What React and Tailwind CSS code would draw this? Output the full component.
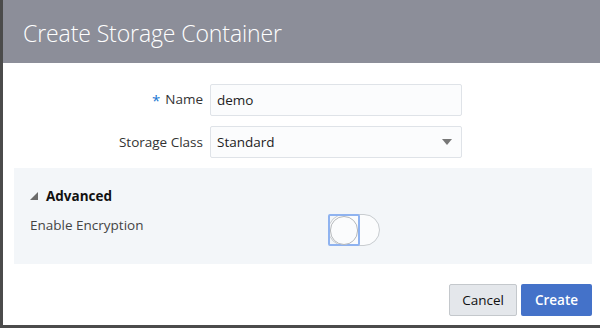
import React from "react";

const App = () => (
  <div
    className="w-[600px] h-[328px] bg-[#4b4b4b] pl-[3px] pb-[3px] overflow-hidden"
    style={{ fontFamily: '"Open Sans", "Noto Sans", sans-serif' }}
  >
    <div className="h-full bg-white flex flex-col">
      {/* Header */}
      <div className="h-[63px] bg-[#8c8e99] flex items-center pl-[20px] pt-[4px] shrink-0">
        <h1 className="text-[23px] text-white font-light tracking-[-0.1px]">Create Storage Container</h1>
      </div>

      {/* Fields */}
      <div className="pt-[21px] flex flex-col gap-[10px]">
        <div className="flex items-center">
          <label className="w-[207px] text-right text-[13.5px] text-[#333] pr-[7px]">
            <span className="text-[#1a77d2] mr-[5px] text-[15px] align-[-2px]">*</span>Name
          </label>
          <div className="w-[252px] h-[32px] border border-[#dfe3e8] rounded-[2px] bg-[#fbfcfd] flex items-center px-[6px] text-[13.5px] text-[#222]">
            demo
          </div>
        </div>
        <div className="flex items-center">
          <label className="w-[207px] text-right text-[13.5px] text-[#333] pr-[7px]">Storage Class</label>
          <div className="w-[252px] h-[32px] border border-[#dfe3e8] rounded-[2px] bg-[#fbfcfd] flex items-center justify-between pl-[6px] pr-[9px] text-[13.5px] text-[#222]">
            <span>Standard</span>
            <svg width="10" height="6" viewBox="0 0 10 6">
              <path d="M0 0 L10 0 L5 6 Z" fill="#777" />
            </svg>
          </div>
        </div>
      </div>

      {/* Advanced */}
      <div className="mt-[10px] mx-[11px] w-[578px] h-[96px] bg-[#f3f6f9] pl-[16px] pt-[18px]">
        <div className="flex items-center gap-[8px]">
          <svg width="8" height="8" viewBox="0 0 8 8">
            <path d="M8 0 L8 8 L0 8 Z" fill="#6b6b6b" />
          </svg>
          <span className="text-[13.5px] font-bold text-[#111]">Advanced</span>
        </div>
        <div className="flex items-start mt-[9px]">
          <span className="w-[298px] text-[13.5px] text-[#444]">Enable Encryption</span>
          <div className="relative mt-[-1px] w-[52px] h-[32px] rounded-full border border-[#c8ccd0] bg-[#fbfcfd]">
            <div className="absolute left-[-1px] top-[-1px] w-[32px] h-[32px] border-2 border-[#8fb3f0] rounded-[2px] flex items-center justify-center">
              <div className="w-[29px] h-[29px] rounded-full border border-[#b5b8bb] bg-[#fbfcfd]" />
            </div>
          </div>
        </div>
      </div>

      {/* Footer */}
      <div className="flex justify-end gap-[4px] pr-[8px] mt-[20px]">
        <button className="w-[68px] h-[32px] rounded-[2px] border border-[#c4c8cc] bg-[#e4e7eb] text-[13.5px] text-[#111]">
          Cancel
        </button>
        <button className="w-[71px] h-[32px] rounded-[2px] bg-[#4472c9] text-[13.5px] font-semibold text-white">
          Create
        </button>
      </div>
    </div>
  </div>
);

export default App;
